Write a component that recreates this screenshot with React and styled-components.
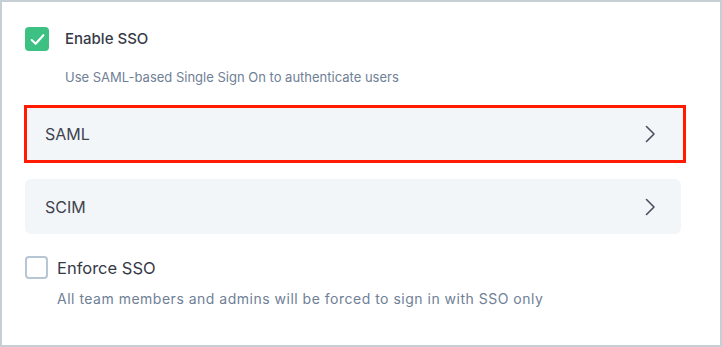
import React from 'react';
import styled, { createGlobalStyle } from 'styled-components';

const GlobalStyle = createGlobalStyle`
  html, body {
    margin: 0;
    padding: 0;
    background: #ffffff;
  }
  * { box-sizing: border-box; }
`;

const Frame = styled.div`
  width: 722px;
  height: 347px;
  border: 2px solid #c6cfd3;
  background: #ffffff;
  padding: 25px 36px 0 22px;
  font-family: 'Inter', 'Open Sans', sans-serif;
  display: flex;
  flex-direction: column;
`;

const Option = styled.label`
  display: flex;
  align-items: center;
  gap: ${(p) => p.$gap}px;
  margin: ${(p) => p.$top || 0}px 0 0 ${(p) => p.$offset || 0}px;
  cursor: pointer;
`;

const Box = styled.span`
  width: ${(p) => p.$size}px;
  height: ${(p) => p.$size}px;
  border-radius: 4px;
  flex-shrink: 0;
  display: flex;
  align-items: center;
  justify-content: center;
  background: ${(p) => (p.$checked ? '#3cc183' : '#ffffff')};
  border: ${(p) => (p.$checked ? 'none' : '2px solid #b7c5d5')};
`;

const Label = styled.span`
  font-size: ${(p) => p.$size}px;
  font-weight: ${(p) => p.$weight};
  color: #363a47;
  line-height: 20px;
`;

const Hint = styled.p`
  margin: ${(p) => p.$top}px 0 0 ${(p) => p.$left}px;
  font-size: ${(p) => p.$size}px;
  letter-spacing: ${(p) => p.$spacing || 0}px;
  color: #6f8096;
  line-height: 16px;
`;

const Rows = styled.div`
  display: flex;
  flex-direction: column;
  align-items: flex-start;
  gap: 16px;
  margin-top: 20px;
`;

const Row = styled.button`
  all: unset;
  box-sizing: border-box;
  display: flex;
  align-items: center;
  justify-content: space-between;
  background: #f3f6f9;
  font-family: 'Inter', 'Open Sans', sans-serif;
  font-size: 16px;
  color: #3f4350;
  cursor: pointer;
  height: ${(p) => (p.$active ? 58 : 55)}px;
  width: ${(p) => (p.$active ? 662 : 656)}px;
  margin-left: ${(p) => (p.$active ? 0 : 1)}px;
  border-radius: ${(p) => (p.$active ? 0 : 6)}px;
  border: ${(p) => (p.$active ? '3px solid #ff1a00' : 'none')};
  padding: 0 ${(p) => (p.$active ? 27 : 25)}px 0 ${(p) => (p.$active ? 18 : 20)}px;
`;

const Chevron = () => (
  <svg width="11" height="18" viewBox="0 0 11 18" fill="none">
    <path d="M1.5 1.5 L9 9 L1.5 16.5" stroke="#4b4f5d" strokeWidth="1.6" strokeLinecap="round" strokeLinejoin="round" />
  </svg>
);

const Check = () => (
  <svg width="17" height="17" viewBox="0 0 16 16" fill="none">
    <path d="M2.5 8.5 L6.3 12 L13.5 4" stroke="#ffffff" strokeWidth="2" strokeLinecap="round" strokeLinejoin="round" />
  </svg>
);

export default function App() {
  return (
    <>
      <GlobalStyle />
      <Frame>
        <Option $gap={16} $offset={1}>
          <Box $size={24} $checked>
            <Check />
          </Box>
          <Label $size={15} $weight={500}>Enable SSO</Label>
        </Option>
        <Hint $top={18} $left={41} $size={13}>Use SAML-based Single Sign On to authenticate users</Hint>

        <Rows>
          <Row $active>
            SAML
            <Chevron />
          </Row>
          <Row>
            SCIM
            <Chevron />
          </Row>
        </Rows>

        <Option $gap={9} $offset={1} $top={22}>
          <Box $size={23} />
          <Label $size={16.5} $weight={400}>Enforce SSO</Label>
        </Option>
        <Hint $top={12} $left={33} $size={14} $spacing={0.5}>All team members and admins will be forced to sign in with SSO only</Hint>
      </Frame>
    </>
  );
}
